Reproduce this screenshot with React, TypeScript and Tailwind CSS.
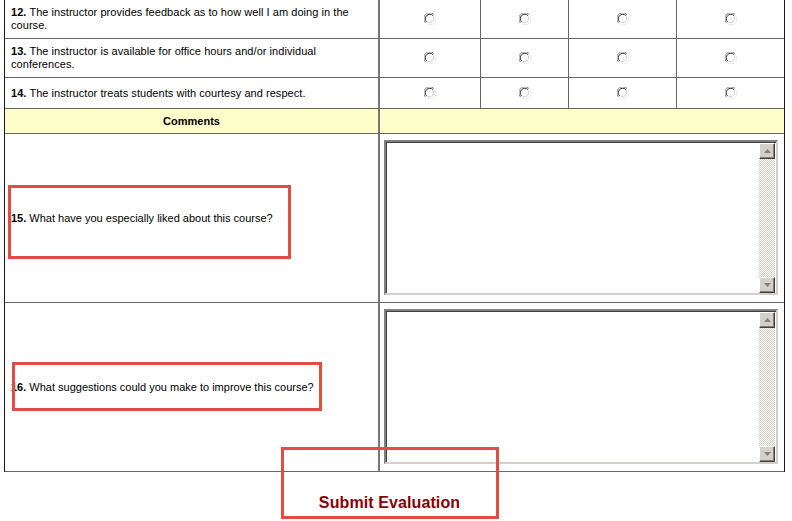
import React from "react";

function Radio() {
  return (
    <svg width="13" height="13" viewBox="0 0 13 13" className="block">
      <circle cx="6.5" cy="6.5" r="5.5" fill="#ffffff" />
      <path d="M1.5 10 A5.5 5.5 0 0 1 10 1.5" fill="none" stroke="#808080" strokeWidth="1" />
      <path d="M2.6 9 A4.3 4.3 0 0 1 9 2.6" fill="none" stroke="#303030" strokeWidth="1" />
      <path d="M10.2 2.4 A5.5 5.5 0 0 1 2.4 10.2" fill="none" stroke="#e8e8e8" strokeWidth="1" />
      <path d="M9.3 3.5 A4.3 4.3 0 0 1 3.5 9.3" fill="none" stroke="#d4d0c8" strokeWidth="1" />
    </svg>
  );
}

function ScrollBtn({ up }: { up: boolean }) {
  return (
    <div className="w-[16px] h-[16px] bg-[#d4d0c8] border border-t-[#ffffff] border-l-[#ffffff] border-b-[#404040] border-r-[#404040] shadow-[inset_-1px_-1px_0_#808080] flex items-center justify-center">
      <svg width="7" height="4" viewBox="0 0 7 4">
        {up ? <polygon points="3.5,0 7,4 0,4" fill="#808080" /> : <polygon points="0,0 7,0 3.5,4" fill="#808080" />}
      </svg>
    </div>
  );
}

function FakeTextarea() {
  return (
    <div className="w-[394px] h-[155px] flex border-2 border-t-[#808080] border-l-[#808080] border-b-[#d4d0c8] border-r-[#d4d0c8] shadow-[inset_1px_1px_0_#404040] bg-white">
      <textarea className="flex-1 resize-none outline-none border-0 bg-transparent ml-px mt-px" />
      <div className="w-[17px] flex flex-col pt-px">
        <ScrollBtn up={true} />
        <div className="flex-1 w-[16px] bg-[image:repeating-conic-gradient(#d4d0c8_0%_25%,#ffffff_0%_50%)] bg-[length:2px_2px]" />
        <ScrollBtn up={false} />
      </div>
    </div>
  );
}

const rows = [
  { n: "12.", t: "The instructor provides feedback as to how well I am doing in the course.", h: "h-[38px]" },
  { n: "13.", t: "The instructor is available for office hours and/or individual conferences.", h: "h-[38px]" },
  { n: "14.", t: "The instructor treats students with courtesy and respect.", h: "h-[30px]" },
];

export default function App() {
  return (
    <div className="relative w-[792px] h-[521px] bg-white overflow-hidden font-['Liberation_Sans',Arial,sans-serif] text-[11px] leading-[13px] text-black">
      <div className="ml-[4px] w-[781px] border-x border-l-[#1a1a1a] border-r-[#1a1a1a]">
        {rows.map((r) => (
          <div key={r.n} className="flex border-b border-[#666666]">
            <div className={`${r.h} w-[375px] border-r-2 border-[#777777] flex items-center pl-[6px] pr-[8px] tracking-[0.05px]`}>
              <p>
                <b>{r.n}</b> {r.t}
              </p>
            </div>
            <div className={`${r.h} w-[101px] border-r border-[#666666] flex items-center justify-center`}>
              <Radio />
            </div>
            <div className={`${r.h} w-[88px] border-r border-[#666666] flex items-center justify-center pl-[1px]`}>
              <Radio />
            </div>
            <div className={`${r.h} w-[108px] border-r border-[#666666] flex items-center justify-center pl-[2px]`}>
              <Radio />
            </div>
            <div className={`${r.h} w-[107px] flex items-center justify-center pl-[1px]`}>
              <Radio />
            </div>
          </div>
        ))}
        <div className="flex border-b border-[#666666] bg-[#ffffcc] h-[25px]">
          <div className="w-[375px] h-[24px] border-r-2 border-[#777777] flex items-center justify-center font-bold">
            Comments
          </div>
          <div className="flex-1" />
        </div>
        <div className="flex border-b border-[#666666] h-[169px]">
          <div className="w-[375px] h-[168px] border-r-2 border-[#777777] flex items-center pl-[6px]">
            <p>
              <b>15.</b> What have you especially liked about this course?
            </p>
          </div>
          <div className="flex-1 pl-[4px] pt-[6px]">
            <FakeTextarea />
          </div>
        </div>
        <div className="flex border-b border-[#666666] h-[169px]">
          <div className="w-[375px] h-[168px] border-r-2 border-[#777777] flex items-center pl-[6px]">
            <p>
              <b>16.</b> What suggestions could you make to improve this course?
            </p>
          </div>
          <div className="flex-1 pl-[4px] pt-[6px]">
            <FakeTextarea />
          </div>
        </div>
      </div>
      <div className="flex justify-center w-[781px] ml-[4px] pr-[10px] pt-[21px]">
        <span className="font-bold text-[16px] leading-[20px] text-[#8b0000] tracking-[0.1px]">Submit Evaluation</span>
      </div>

      <div className="absolute left-[8px] top-[185px] w-[283px] h-[74px] border-[3px] border-[#e64a45]" />
      <div className="absolute left-[12px] top-[362px] w-[310px] h-[49px] border-[3px] border-[#e64a45]" />
      <div className="absolute left-[281px] top-[447px] w-[218px] h-[72px] border-[3px] border-[#e64a45]" />
    </div>
  );
}
